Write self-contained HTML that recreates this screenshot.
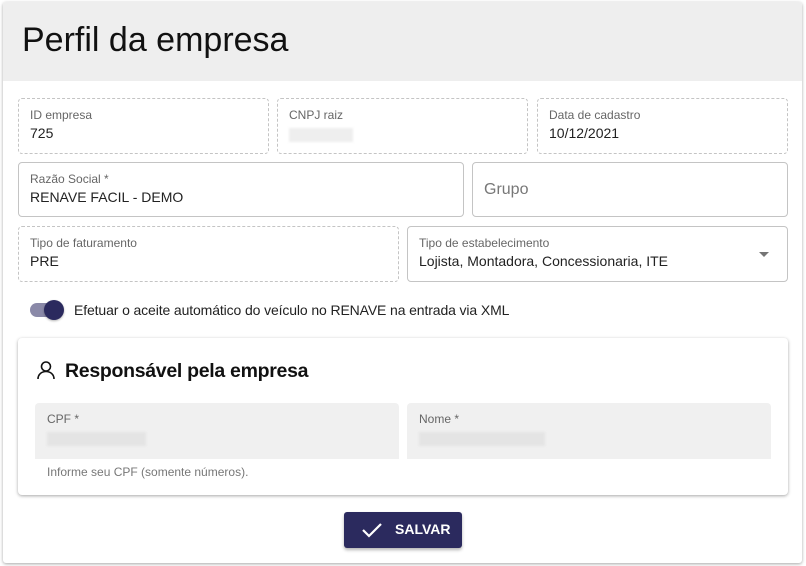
<!DOCTYPE html>
<html><head><meta charset="utf-8"><style>
*{box-sizing:border-box;margin:0;padding:0}
body{width:806px;height:566px;background:#fff;font-family:"Liberation Sans",Roboto,sans-serif;position:relative;overflow:hidden;color:#212121}
.abs{position:absolute}
.card{left:3px;top:2px;width:799px;height:561px;background:#fff;box-shadow:0 1px 3px rgba(0,0,0,.35);border-radius:3px}
.hdr{left:3px;top:2px;width:799px;height:79px;background:#eeeeee;border-radius:3px 3px 0 0}
.f{position:absolute;border-radius:4px}
.d{border:1px dashed #c4c4c4}
.s{border:1px solid #c4c4c4}
.lab{position:absolute;left:11px;top:9px;font-size:12px;color:#666}
.val{position:absolute;left:11px;top:26px;font-size:14px;color:#222}
.blur{position:absolute;left:11px;top:29px;height:14px;background:#eee;filter:blur(1px)}
</style></head><body>
<div class="abs card"></div>
<div class="abs hdr"></div>
<div class="abs" style="left:22px;top:21px;font-size:34px;color:#111">Perfil da empresa</div>

<div class="f d" style="left:18px;top:98px;width:251px;height:56px"><div class="lab">ID empresa</div><div class="val">725</div></div>
<div class="f d" style="left:277px;top:98px;width:251px;height:56px"><div class="lab">CNPJ raiz</div><div class="blur" style="width:64px"></div></div>
<div class="f d" style="left:537px;top:98px;width:251px;height:56px"><div class="lab">Data de cadastro</div><div class="val">10/12/2021</div></div>

<div class="f s" style="left:18px;top:162px;width:446px;height:55px"><div class="lab">Razão Social *</div><div class="val">RENAVE FACIL - DEMO</div></div>
<div class="f s" style="left:472px;top:162px;width:316px;height:55px"><div class="val" style="top:18px;font-size:16px;color:#777">Grupo</div></div>

<div class="f d" style="left:18px;top:226px;width:381px;height:56px"><div class="lab">Tipo de faturamento</div><div class="val">PRE</div></div>
<div class="f s" style="left:407px;top:226px;width:381px;height:56px"><div class="lab">Tipo de estabelecimento</div><div class="val">Lojista, Montadora, Concessionaria, ITE</div>
<div class="abs" style="left:351px;top:25px;width:0;height:0;border-left:5px solid transparent;border-right:5px solid transparent;border-top:5px solid #757575"></div></div>

<div class="abs" style="left:30px;top:303px;width:28px;height:14px;border-radius:7px;background:#8a89a8"></div>
<div class="abs" style="left:44px;top:300px;width:20px;height:20px;border-radius:50%;background:#2b2a5e;box-shadow:0 1px 2px rgba(0,0,0,.3)"></div>
<div class="abs" style="left:74px;top:302px;font-size:14px;letter-spacing:-0.12px;color:#222">Efetuar o aceite automático do veículo no RENAVE na entrada via XML</div>

<div class="abs" style="left:18px;top:338px;width:770px;height:157px;background:#fff;border-radius:4px;box-shadow:0 1px 3px rgba(0,0,0,.35)"></div>
<svg class="abs" style="left:36px;top:360px" width="20" height="20" viewBox="0 0 20 20" fill="none" stroke="#111" stroke-width="1.6"><circle cx="10" cy="6.5" r="4.5"/><path d="M2 19c0-4.5 3.5-7.5 8-7.5s8 3 8 7.5"/></svg>
<div class="abs" style="left:65px;top:360px;font-size:19.5px;font-weight:bold;letter-spacing:-0.3px;color:#111">Responsável pela empresa</div>

<div class="f" style="left:35px;top:403px;width:364px;height:56px;background:#f0f0f0;border-radius:4px 4px 0 0"><div class="lab" style="left:12px;top:9px">CPF *</div><div class="blur" style="left:12px;width:99px;background:#e4e4e4"></div></div>
<div class="f" style="left:407px;top:403px;width:364px;height:56px;background:#f0f0f0;border-radius:4px 4px 0 0"><div class="lab" style="left:12px;top:9px">Nome *</div><div class="blur" style="left:12px;width:126px;background:#e4e4e4"></div></div>
<div class="abs" style="left:47px;top:465px;font-size:12px;color:#777">Informe seu CPF (somente números).</div>

<div class="abs" style="left:344px;top:512px;width:118px;height:36px;background:#2b2a5e;border-radius:3px;box-shadow:0 2px 3px rgba(0,0,0,.3)"></div>
<svg class="abs" style="left:361px;top:520px" width="22" height="20" viewBox="0 0 22 20" fill="none" stroke="#fff" stroke-width="2.2"><path d="M2 10l6 6L20 4"/></svg>
<div class="abs" style="left:395px;top:521px;font-size:14px;font-weight:bold;color:#fff">SALVAR</div>
</body></html>
